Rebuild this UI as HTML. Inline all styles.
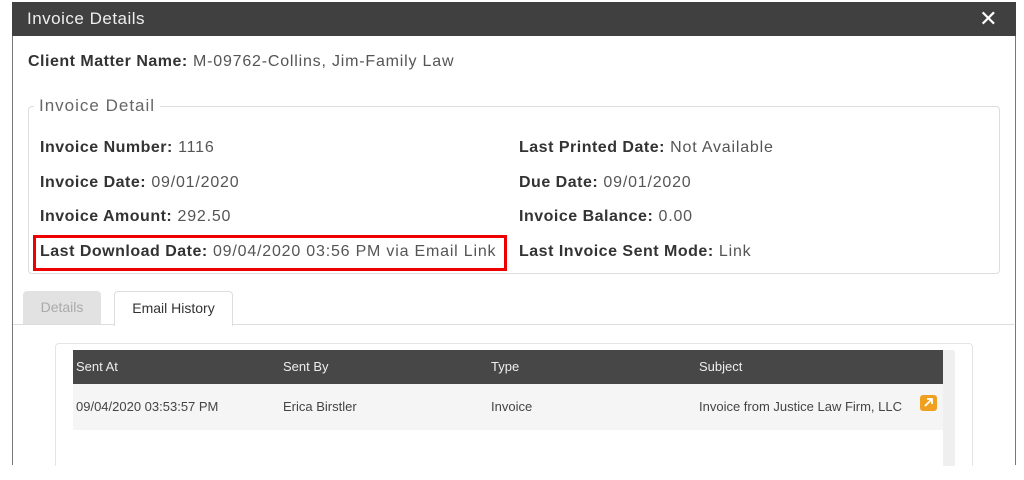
<!DOCTYPE html>
<html><head><style>
body{margin:0;width:1024px;height:480px;background:#fff;font-family:"Liberation Sans",sans-serif;position:relative;overflow:hidden;color:#444}
.a{position:absolute}
.dlg{left:12px;top:2px;width:1002px;height:463px;border-left:1px solid #777;border-right:1px solid #777}
.hdr{left:12px;top:2px;width:1004px;height:34px;background:#404040;color:#eee;font-size:17px;line-height:34px;letter-spacing:.5px}
.t{font-size:16px;color:#555;white-space:nowrap;letter-spacing:.8px}
.t b{color:#333;letter-spacing:.5px}
</style></head><body>
<div class="a dlg"></div>
<div class="a hdr"><span style="margin-left:15px">Invoice Details</span><span style="position:absolute;right:18px;top:0;font-size:22px;color:#fff">✕</span></div>
<div class="a t" style="left:28px;top:53px"><b>Client Matter Name:</b> M-09762-Collins, Jim-Family Law</div>
<div class="a" style="left:28px;top:106px;width:970px;height:166px;border:1px solid #ddd;border-radius:4px"></div>
<div class="a t" style="left:34px;top:96px;background:#fff;padding:0 5px;font-size:17px;color:#666;letter-spacing:1px">Invoice Detail</div>
<div class="a t" style="left:40px;top:139px"><b>Invoice Number:</b> 1116</div>
<div class="a t" style="left:40px;top:174px"><b>Invoice Date:</b> 09/01/2020</div>
<div class="a t" style="left:40px;top:208px"><b>Invoice Amount:</b> 292.50</div>
<div class="a t" style="left:40px;top:243px"><b>Last Download Date:</b> 09/04/2020 03:56 PM via Email Link</div>
<div class="a" style="left:33px;top:235px;width:468px;height:30px;border:3px solid #e00"></div>
<div class="a t" style="left:519px;top:139px"><b>Last Printed Date:</b> Not Available</div>
<div class="a t" style="left:519px;top:174px"><b>Due Date:</b> 09/01/2020</div>
<div class="a t" style="left:519px;top:208px"><b>Invoice Balance:</b> 0.00</div>
<div class="a t" style="left:519px;top:243px"><b>Last Invoice Sent Mode:</b> Link</div>
<div class="a" style="left:13px;top:324px;width:1001px;border-top:1px solid #ddd"></div>
<div class="a" style="left:23px;top:291px;width:78px;height:33px;background:#e2e2e2;border-radius:4px 4px 0 0;color:#aaa;font-size:14px;text-align:center;line-height:33px">Details</div>
<div class="a" style="left:114px;top:291px;width:117px;height:34px;background:#fff;border:1px solid #ddd;border-bottom:none;border-radius:4px 4px 0 0;color:#333;font-size:14px;text-align:center;line-height:32px">Email History</div>
<div class="a" style="left:55px;top:343px;width:916px;height:130px;border:1px solid #e4e4e4;border-radius:4px"></div>
<div class="a" style="left:73px;top:350px;width:882px;height:130px;background:#efefef;border-radius:3px"></div>
<div class="a" style="left:73px;top:350px;width:870px;height:34px;background:#474747;color:#eee;font-size:13px;line-height:34px"><span class="a" style="left:3px">Sent At</span><span class="a" style="left:210px">Sent By</span><span class="a" style="left:418px">Type</span><span class="a" style="left:626px">Subject</span></div>
<div class="a" style="left:73px;top:384px;width:870px;height:46px;background:#f5f5f5;color:#444;font-size:13px;line-height:46px"><span class="a" style="left:3px">09/04/2020 03:53:57 PM</span><span class="a" style="left:210px">Erica Birstler</span><span class="a" style="left:418px">Invoice</span><span class="a" style="left:626px">Invoice from Justice Law Firm, LLC</span></div>
<div class="a" style="left:73px;top:430px;width:870px;height:50px;background:#fff"></div>
<div class="a" style="left:920px;top:395px;width:17px;height:16px;background:#f0a020;border-radius:3px"><svg width="17" height="16"><path d="M5 11L12 4M7 4h5v5" stroke="#fff" stroke-width="1.8" fill="none"/></svg></div>
<div class="a" style="left:0;top:466px;width:1024px;height:14px;background:#fff"></div>
</body></html>
